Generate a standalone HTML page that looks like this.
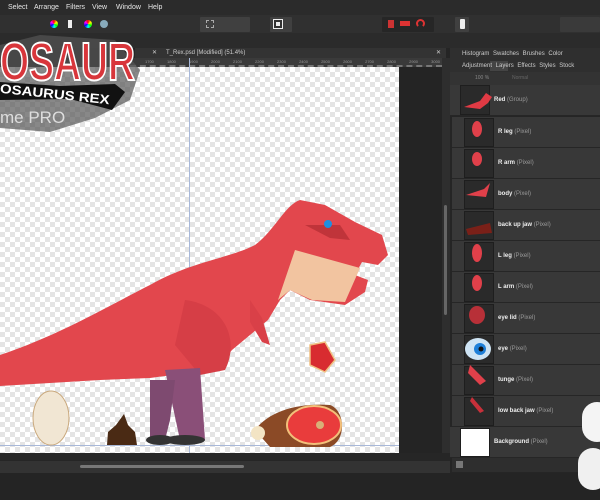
<!DOCTYPE html>
<html><head><style>
*{margin:0;padding:0;box-sizing:border-box}
body{width:600px;height:500px;background:#252525;font-family:"Liberation Sans",sans-serif;font-size:7px;color:#ddd;position:relative;overflow:hidden}
.abs{position:absolute}
.menu{left:0;top:0;width:600px;height:15px;background:#2b2b2b}
.menu span{position:absolute;top:4px;font-size:7px;color:#e6e6e6}
.tool{left:0;top:15px;width:600px;height:18px;background:#303030}
.btn{position:absolute;top:17px;height:15px;background:#404040;border-radius:1px}
.checker{background-color:#fff;background-image:linear-gradient(45deg,#e4e4e4 25%,transparent 25%,transparent 75%,#e4e4e4 75%),linear-gradient(45deg,#e4e4e4 25%,transparent 25%,transparent 75%,#e4e4e4 75%);background-size:10px 10px;background-position:0 0,5px 5px}
.row{position:absolute;left:452px;width:148px;height:31px;background:#383838;border-bottom:1px solid #262626}
.row .th{position:absolute;left:12px;top:1px;width:30px;height:29px;background:#2a2a2a;border:1px solid #1e1e1e}
.row .t{position:absolute;left:46px;top:12px;font-size:6px;color:#eee;font-weight:bold}
.row .t i{font-style:normal;font-weight:normal;color:#999}
</style></head><body>
<div class="abs menu"><span style="left:8px">Select</span><span style="left:34px">Arrange</span><span style="left:66px">Filters</span><span style="left:92px">View</span><span style="left:116px">Window</span><span style="left:148px">Help</span></div>
<div class="abs tool"></div>
<div class="btn" style="left:200px;width:50px"></div>
<div class="btn" style="left:270px;width:22px"></div>
<div class="btn" style="left:382px;width:52px;background:#262626"></div>
<div class="btn" style="left:455px;width:14px"></div>
<div class="btn" style="left:560px;width:40px;background:#3a3a3a"></div>
<div class="abs" style="left:206px;top:20px;width:8px;height:8px;border:1px dashed #aaa"></div>
<div class="abs" style="left:274px;top:20px;width:8px;height:8px;background:#eee;border:2px solid #333;outline:1px solid #eee"></div>
<div class="abs" style="left:388px;top:20px;width:6px;height:8px;background:#c33"></div>
<div class="abs" style="left:400px;top:21px;width:10px;height:5px;background:#d33"></div>
<div class="abs" style="left:416px;top:19px;width:9px;height:9px;border:2px solid #d33;border-radius:50%;border-bottom-color:transparent"></div>
<div class="abs" style="left:460px;top:19px;width:5px;height:10px;background:#eee;border-radius:1px"></div>
<div class="abs" style="left:50px;top:20px;width:8px;height:8px;border-radius:50%;background:conic-gradient(red,yellow,lime,cyan,blue,magenta,red)"></div>
<div class="abs" style="left:68px;top:20px;width:4px;height:8px;background:#eee"></div>
<div class="abs" style="left:84px;top:20px;width:8px;height:8px;border-radius:50%;background:conic-gradient(red,yellow,lime,cyan,blue,magenta,red)"></div>
<div class="abs" style="left:100px;top:20px;width:8px;height:8px;border-radius:50%;background:#8ab"></div>
<!-- dark band & tabs -->
<div class="abs" style="left:0;top:33px;width:600px;height:15px;background:#2b2b2b"></div>
<div class="abs" style="left:135px;top:48px;width:311px;height:10px;background:#333"></div>
<div class="abs" style="left:152px;top:49px;font-size:6px;color:#ccc">✕</div>
<div class="abs" style="left:166px;top:50px;font-size:6px;color:#ccc">T_Rex.psd [Modified] (51.4%)</div>
<div class="abs" style="left:436px;top:49px;font-size:6px;color:#ccc">✕</div>
<div class="abs" style="left:130px;top:58px;width:312px;height:9px;background:#3a3a3a;border-bottom:2px dashed #777"></div>
<div class="abs" style="left:145px;top:59px;font-size:4px;color:#999;word-spacing:12px;white-space:nowrap">1700 1800 1900 2000 2100 2200 2300 2400 2500 2600 2700 2800 2900 3000 3100 3200 3300 3400 3500 3600 3700</div>
<!-- canvas -->
<div class="abs checker" style="left:0;top:67px;width:399px;height:386px"></div>
<div class="abs" style="left:189px;top:58px;width:1px;height:395px;background:#a8b8d8"></div>
<div class="abs" style="left:0;top:445px;width:399px;height:1px;background:#a8b8d8"></div>
<div class="abs" style="left:399px;top:67px;width:43px;height:386px;background:#242424"></div>
<div class="abs" style="left:442px;top:58px;width:8px;height:400px;background:#2e2e2e"></div>
<div class="abs" style="left:444px;top:205px;width:3px;height:110px;background:#666;border-radius:2px"></div>
<div class="abs" style="left:0;top:453px;width:450px;height:8px;background:#262626"></div>
<div class="abs" style="left:0;top:461px;width:450px;height:12px;background:#333"></div>
<div class="abs" style="left:80px;top:465px;width:164px;height:3px;background:#777;border-radius:2px"></div>
<div class="abs" style="left:0;top:473px;width:600px;height:27px;background:#242424"></div>
<!-- art -->
<svg class="abs" style="left:0;top:0" width="450" height="460" viewBox="0 0 450 460">
<path d="M0 45 L40 35 L115 40 L140 70 L130 100 L95 118 L50 132 L0 128 Z" fill="#555" opacity="0.7"/>
<path d="M0 82 L60 86 L115 84 L125 92 L112 110 L70 99 L0 100 Z" fill="#111"/>
<text x="0" y="80" font-family="Liberation Sans" font-weight="bold" font-size="54" fill="#d8363b" stroke="#fff" stroke-width="2" textLength="135" lengthAdjust="spacingAndGlyphs">OSAUR</text>
<text x="0" y="98" font-family="Liberation Sans" font-weight="bold" font-size="13" fill="#fff" textLength="110" lengthAdjust="spacingAndGlyphs" transform="rotate(6 50 92)">OSAURUS REX</text>
<text x="0" y="123" font-family="Liberation Sans" font-size="17" fill="#ddd">me PRO</text>
<!-- dino -->
<path d="M0 355 C60 335 110 305 150 285 C190 262 230 258 255 245 C275 230 285 205 300 200 L325 205 L355 222 L382 235 L388 255 L378 265 L362 262 L355 275 L368 280 L365 292 L345 305 L310 300 L290 290 L280 300 L268 320 L250 335 L232 350 L220 365 L195 372 L150 378 L100 380 L50 383 L0 386 Z" fill="#e2474d"/>
<path d="M295 250 L360 268 L345 302 L312 300 L290 290 L278 300 Z" fill="#f2c4a0"/>
<path d="M305 225 L340 225 L350 240 L330 238 Z" fill="#c0343a"/>
<circle cx="328" cy="224" r="4" fill="#1e8fe0"/>
<path d="M250 300 L262 318 L270 345 L262 342 L250 322 Z" fill="#d94048"/>
<path d="M185 300 C225 305 240 340 225 370 L200 375 L175 345 Z" fill="#d63e46"/>
<path d="M165 370 L200 368 L205 440 L180 440 Z" fill="#8a4f78"/>
<path d="M150 380 L175 380 L170 420 L165 440 L150 440 Z" fill="#7e4a70"/>
<ellipse cx="185" cy="440" rx="20" ry="5" fill="#333"/>
<ellipse cx="160" cy="440" rx="14" ry="5" fill="#333"/>
<ellipse cx="51" cy="418" rx="18" ry="27" fill="#f1e6d3" stroke="#c9a87c" stroke-width="1"/>
<path d="M107 445 L137 445 L135 432 L128 425 L124 414 L116 425 L108 432 Z" fill="#4a2a14"/>
<path d="M255 430 C270 410 300 403 330 405 C345 410 347 440 330 447 L270 447 Z" fill="#8b4a26"/>
<ellipse cx="314" cy="425" rx="27" ry="19" fill="#e93c3c" stroke="#f2c07a" stroke-width="2"/>
<circle cx="320" cy="425" r="4" fill="#d8b078"/>
<circle cx="258" cy="433" r="7" fill="#f3e4c4"/>
<path d="M310 345 L325 342 L335 360 L325 372 L310 365 Z" fill="#d82c30" stroke="#f0c080" stroke-width="1.5"/>
</svg>
<!-- right panel -->
<div class="abs" style="left:450px;top:48px;width:150px;height:12px;background:#2f2f2f"></div>
<div class="abs" style="left:462px;top:51px;font-size:6px;color:#ccc;word-spacing:2px">Histogram Swatches Brushes Color</div>
<div class="abs" style="left:450px;top:60px;width:150px;height:12px;background:#2f2f2f"></div>
<div class="abs" style="left:490px;top:61px;width:18px;height:10px;background:#444"></div>
<div class="abs" style="left:462px;top:63px;font-size:6px;color:#ccc;word-spacing:2px">Adjustment Layers Effects Styles Stock</div>
<div class="abs" style="left:450px;top:72px;width:150px;height:13px;background:#333"></div>
<div class="abs" style="left:475px;top:75px;font-size:5px;color:#888">100 %</div>
<div class="abs" style="left:512px;top:75px;font-size:5px;color:#666">Normal</div>
<div class="row" style="top:85px;left:450px;width:150px"><div class="th" style="left:10px;top:0;width:30px;height:30px"></div><div class="t" style="left:44px;top:12px">Red <i>(Group)</i></div></div>
<div class="row" style="top:117px"><div class="th"></div><div class="t">R leg <i>(Pixel)</i></div></div>
<div class="row" style="top:148px"><div class="th"></div><div class="t">R arm <i>(Pixel)</i></div></div>
<div class="row" style="top:179px"><div class="th"></div><div class="t">body <i>(Pixel)</i></div></div>
<div class="row" style="top:210px"><div class="th"></div><div class="t">back up jaw <i>(Pixel)</i></div></div>
<div class="row" style="top:241px"><div class="th"></div><div class="t">L leg <i>(Pixel)</i></div></div>
<div class="row" style="top:272px"><div class="th"></div><div class="t">L arm <i>(Pixel)</i></div></div>
<div class="row" style="top:303px"><div class="th"></div><div class="t">eye lid <i>(Pixel)</i></div></div>
<div class="row" style="top:334px"><div class="th"></div><div class="t">eye <i>(Pixel)</i></div></div>
<div class="row" style="top:365px"><div class="th"></div><div class="t">tunge <i>(Pixel)</i></div></div>
<div class="row" style="top:396px"><div class="th"></div><div class="t">low back jaw <i>(Pixel)</i></div></div>
<div class="row" style="top:427px;left:450px;width:150px"><div class="th" style="left:10px;background:#fff"></div><div class="t" style="left:44px">Background <i>(Pixel)</i></div></div>
<svg class="abs" style="left:450px;top:85px" width="150" height="345">
<path d="M14 22 L30 16 L36 8 L42 12 L38 18 L30 24 Z" fill="#e03a44"/>
<g fill="#e0404a"><ellipse cx="27" cy="44" rx="5" ry="8"/><ellipse cx="27" cy="74" rx="5" ry="7"/><path d="M16 110 L34 104 L40 98 L36 112 Z"/><ellipse cx="27" cy="168" rx="5" ry="9"/><ellipse cx="27" cy="198" rx="5" ry="8"/><ellipse cx="27" cy="230" rx="8" ry="9" fill="#b83038"/><path d="M20 280 L36 296 L30 300 L18 288 Z"/><path d="M22 312 L34 326 L30 328 L20 316 Z" fill="#c8303a"/></g>
<path d="M16 144 L40 138 L42 148 L18 150 Z" fill="#7a2018"/>
<ellipse cx="28" cy="264" rx="13" ry="11" fill="#cfe4f4"/><circle cx="30" cy="264" r="6" fill="#1e7fd8"/><circle cx="31" cy="264" r="2.5" fill="#111"/>
</svg>
<div class="abs" style="left:452px;top:458px;width:148px;height:14px;background:#2e2e2e"></div>
<div class="abs" style="left:456px;top:461px;width:7px;height:7px;background:#777"></div>
<div class="abs" style="left:582px;top:402px;width:30px;height:40px;background:#f4f4f4;border-radius:15px"></div>
<div class="abs" style="left:578px;top:448px;width:30px;height:42px;background:#f0f0f0;border-radius:15px"></div>
</body></html>
